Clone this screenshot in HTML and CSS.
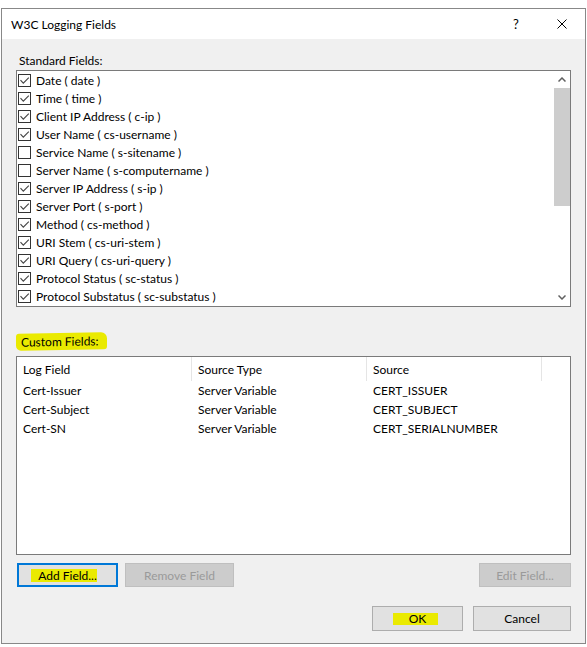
FILE: index.html
```html
<!DOCTYPE html>
<html>
<head>
<meta charset="utf-8">
<link rel="stylesheet" href="styles.css">
</head>
<body>
<svg width="0" height="0" class="defs">
  <defs>
    <symbol id="cb-on" viewBox="0 0 13 13">
      <rect x="0.5" y="0.5" width="12" height="12" fill="#fff" stroke="#333"/>
      <polyline points="2.5,6.2 5.3,9.2 10.8,3.6" fill="none" stroke="#444" stroke-width="1.1"/>
    </symbol>
    <symbol id="cb-off" viewBox="0 0 13 13">
      <rect x="0.5" y="0.5" width="12" height="12" fill="#fff" stroke="#333"/>
    </symbol>
  </defs>
</svg>
<div class="window">
  <div class="titlebar">
    <span class="title">W3C Logging Fields</span>
    <span class="tb-btn help">?</span>
    <span class="tb-btn close">
      <svg width="10" height="10" viewBox="0 0 10 10"><path d="M0.5 0.5 L9.5 9.5 M9.5 0.5 L0.5 9.5" stroke="#000" stroke-width="1" fill="none"/></svg>
    </span>
  </div>
  <div class="body">
    <div class="label">Standard Fields:</div>
    <div class="listbox">
      <div class="items">
        <div class="item"><svg class="cb"><use href="#cb-on"/></svg><span>Date ( date )</span></div>
        <div class="item"><svg class="cb"><use href="#cb-on"/></svg><span>Time ( time )</span></div>
        <div class="item"><svg class="cb"><use href="#cb-on"/></svg><span>Client IP Address ( c-ip )</span></div>
        <div class="item"><svg class="cb"><use href="#cb-on"/></svg><span>User Name ( cs-username )</span></div>
        <div class="item"><svg class="cb"><use href="#cb-off"/></svg><span>Service Name ( s-sitename )</span></div>
        <div class="item"><svg class="cb"><use href="#cb-off"/></svg><span>Server Name ( s-computername )</span></div>
        <div class="item"><svg class="cb"><use href="#cb-on"/></svg><span>Server IP Address ( s-ip )</span></div>
        <div class="item"><svg class="cb"><use href="#cb-on"/></svg><span>Server Port ( s-port )</span></div>
        <div class="item"><svg class="cb"><use href="#cb-on"/></svg><span>Method ( cs-method )</span></div>
        <div class="item"><svg class="cb"><use href="#cb-on"/></svg><span>URI Stem ( cs-uri-stem )</span></div>
        <div class="item"><svg class="cb"><use href="#cb-on"/></svg><span>URI Query ( cs-uri-query )</span></div>
        <div class="item"><svg class="cb"><use href="#cb-on"/></svg><span>Protocol Status ( sc-status )</span></div>
        <div class="item"><svg class="cb"><use href="#cb-on"/></svg><span>Protocol Substatus ( sc-substatus )</span></div>
      </div>
      <div class="scrollbar">
        <div class="arrow">
          <svg width="8" height="5" viewBox="0 0 8 5"><path d="M0.5 4.5 L4 1 L7.5 4.5" fill="none" stroke="#606060" stroke-width="1.5"/></svg>
        </div>
        <div class="thumb"></div>
        <div class="track"></div>
        <div class="arrow">
          <svg width="8" height="5" viewBox="0 0 8 5"><path d="M0.5 0.5 L4 4 L7.5 0.5" fill="none" stroke="#606060" stroke-width="1.5"/></svg>
        </div>
      </div>
    </div>

    <div class="label custom-label"><span class="hl hl-custom">Custom Fields:</span></div>
    <div class="listview">
      <div class="lv-row lv-head">
        <div class="lv-cell">Log Field</div>
        <div class="lv-cell">Source Type</div>
        <div class="lv-cell">Source</div>
      </div>
      <div class="lv-row">
        <div class="lv-cell">Cert-Issuer</div>
        <div class="lv-cell">Server Variable</div>
        <div class="lv-cell">CERT_ISSUER</div>
      </div>
      <div class="lv-row">
        <div class="lv-cell">Cert-Subject</div>
        <div class="lv-cell">Server Variable</div>
        <div class="lv-cell">CERT_SUBJECT</div>
      </div>
      <div class="lv-row">
        <div class="lv-cell">Cert-SN</div>
        <div class="lv-cell">Server Variable</div>
        <div class="lv-cell">CERT_SERIALNUMBER</div>
      </div>
    </div>

    <div class="btn-row">
      <div class="btn default btn-add"><span class="hl hl-add">Add Field...</span></div>
      <div class="btn disabled btn-remove">Remove Field</div>
      <div class="btn disabled btn-edit">Edit Field...</div>
    </div>
    <div class="btn-row dialog-row">
      <div class="btn btn-ok"><span class="hl hl-ok">OK</span></div>
      <div class="btn btn-cancel">Cancel</div>
    </div>
  </div>
</div>
</body>
</html>
```
FILE: styles.css
```css
* { box-sizing: border-box; }
html, body { margin: 0; padding: 0; background: #fff; }
body {
  padding: 8px 0 0 1px;
  font-family: Lato, "Liberation Sans", sans-serif;
  font-size: 12px;
  color: #000;
}
.defs { position: absolute; width: 0; height: 0; }
.window {
  width: 585px;
  height: 636px;
  border: 1px solid #888;
  display: flex;
  flex-direction: column;
  background: #f0f0f0;
}
.titlebar {
  height: 30px;
  background: #fff;
  display: flex;
  align-items: center;
  flex: none;
}
.title { padding-left: 9px; flex: 1; }
.tb-btn {
  width: 46px;
  height: 30px;
  display: flex;
  align-items: center;
  justify-content: center;
}
.help { font-size: 13px; }
.body {
  flex: 1;
  padding: 14px 14px 0 14px;
  display: flex;
  flex-direction: column;
}
.label { height: 16px; line-height: 16px; padding-left: 3px; }
.listbox {
  margin-top: 1px;
  height: 237px;
  border: 1px solid #7a7a7a;
  background: #fff;
  display: flex;
}
.items { flex: 1; padding-left: 1px; }
.item {
  height: 18px;
  display: flex;
  align-items: center;
  gap: 5px;
}
.cb { width: 13px; height: 13px; flex: none; }
.scrollbar {
  width: 17px;
  display: flex;
  flex-direction: column;
  background: #fff;
  padding-left: 1px;
}
.arrow {
  height: 17px;
  display: flex;
  align-items: center;
  justify-content: center;
}
.thumb { height: 118px; background: #cdcdcd; }
.track { flex: 1; }
.custom-label { margin-top: 26px; height: 17px; line-height: 17px; padding-left: 0; }
.hl { background: #eaea00; }
.hl-custom {
  display: inline-block;
  padding: 0 8px 0 5px;
  border-radius: 3px 6px 3px 5px;
  transform: skewY(-1deg);
}
.listview {
  margin-top: 6px;
  height: 199px;
  border: 1px solid #7a7a7a;
  background: #fff;
}
.lv-row {
  display: grid;
  grid-template-columns: 175px 175px 175px;
  height: 19px;
  align-items: center;
}
.lv-cell { padding-left: 6px; white-space: nowrap; }
.lv-head { height: 24px; margin-bottom: 0; align-items: stretch; }
.lv-head .lv-cell {
  border-right: 1px solid #e5e5e5;
  display: flex;
  align-items: center;
}
.btn-row {
  display: flex;
  margin-top: 8px;
  padding-left: 1px;
}
.btn {
  height: 24px;
  display: flex;
  align-items: center;
  justify-content: center;
  background: #e1e1e1;
  border: 1px solid #adadad;
  white-space: nowrap;
}
.btn.default { border: 2px solid #0078d7; }
.btn.disabled { background: #cccccc; border-color: #bfbfbf; color: #9a9a9a; }
.btn-add { width: 101px; }
.btn-remove { width: 109px; margin-left: 7px; }
.btn-edit { width: 92px; margin-left: auto; }
.hl-add { padding-left: 7px; margin-left: -7px; line-height: 13px; }
.dialog-row { margin-top: 19px; justify-content: flex-end; }
.btn-ok { width: 91px; height: 25px; }
.btn-cancel { width: 98px; height: 25px; margin-left: 10px; }
.hl-ok { padding: 0 12px 0 16px; margin: 0 -12px 0 -16px; line-height: 12px; }
```
